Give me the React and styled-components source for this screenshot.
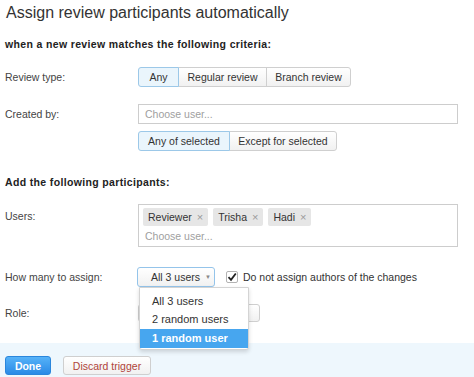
import React from "react";
import styled, { createGlobalStyle } from "styled-components";

const Global = createGlobalStyle`
  html, body { margin: 0; padding: 0; background: #fff; }
  body { font-family: "Liberation Sans", Arial, sans-serif; font-size: 10.5px; color: #333; overflow: hidden; }
  * { box-sizing: border-box; }
`;

const Page = styled.div`
  width: 474px;
  height: 377px;
  display: flex;
  flex-direction: column;
  position: relative;
`;

const Body = styled.div`
  padding: 0 5px;
  display: flex;
  flex-direction: column;
`;

const Title = styled.h1`
  margin: 0 0 0 1px;
  font-size: 16px;
  font-weight: normal;
  line-height: 26px;
  color: #333;
`;

const Section = styled.h2`
  margin: ${(p) => p.$top}px 0 0;
  font-size: 10.5px;
  font-weight: bold;
  letter-spacing: 0.35px;
  line-height: 14px;
  color: #222;
`;

const Row = styled.div`
  display: grid;
  grid-template-columns: 133px 1fr;
  margin-top: ${(p) => p.$top}px;
  align-items: ${(p) => (p.$top_align ? "start" : "center")};
`;

const Label = styled.div`
  line-height: ${(p) => p.$lh || 20}px;
  color: #444;
`;

const Controls = styled.div`
  display: flex;
  flex-direction: column;
  gap: 7px;
  align-items: flex-start;
`;

const Inline = styled.div`
  display: flex;
  align-items: center;
  gap: 11px;
  position: relative;
`;

const Segmented = styled.div`
  display: inline-flex;
  height: 20px;
`;

const Seg = styled.button`
  font: inherit;
  color: #333;
  height: 20px;
  width: ${(p) => p.$w}px;
  padding: 0;
  white-space: nowrap;
  border: 1px solid ${(p) => (p.$active ? "#9cc8e8" : "#cfcfcf")};
  margin-left: ${(p) => (p.$first ? 0 : -1)}px;
  position: relative;
  z-index: ${(p) => (p.$active ? 1 : 0)};
  background: ${(p) =>
    p.$active ? "#eaf5fc" : "linear-gradient(#ffffff, #f1f1f1)"};
  border-radius: ${(p) =>
    p.$first ? "3px 0 0 3px" : p.$last ? "0 3px 3px 0" : "0"};
`;

const Input = styled.div`
  width: 320px;
  height: 20px;
  border: 1px solid #cdcdcd;
  padding: 0 6px;
  line-height: 18px;
  color: #a0a0a0;
`;

const TagBox = styled.div`
  width: 320px;
  height: 43px;
  border: 1px solid #cdcdcd;
  padding: 3px 4px 0;
  display: flex;
  flex-direction: column;
  gap: 2px;
`;

const Tags = styled.div`
  display: flex;
  gap: 5px;
`;

const Tag = styled.span`
  display: inline-flex;
  align-items: center;
  gap: 5px;
  height: 18px;
  padding: 0 5px;
  background: #e6e6e6;
  border-radius: 2px;
  color: #333;
`;

const X = styled.span`
  color: #9a9a9a;
  font-size: 11px;
`;

const Placeholder = styled.span`
  color: #a0a0a0;
  padding-left: 2px;
  line-height: 16px;
`;

const DropButton = styled.button`
  font: inherit;
  color: #333;
  height: ${(p) => p.$h || 20}px;
  width: ${(p) => p.$w}px;
  margin-left: ${(p) => p.$ml || 0}px;
  padding: 0 0 0 ${(p) => p.$pl || 0}px;
  white-space: nowrap;
  text-align: left;
  border: 1px solid ${(p) => (p.$focus ? "#94c4ea" : "#cfcfcf")};
  border-radius: 3px;
  background: linear-gradient(#ffffff, #f1f1f1);
  display: flex;
  align-items: center;
  gap: 5px;
`;

const Caret = styled.span`
  font-size: 6px;
  color: #888;
`;

const Check = styled.label`
  display: flex;
  align-items: center;
  gap: 5px;
  color: #333;
  white-space: nowrap;
`;

const Box = styled.span`
  width: 12px;
  height: 12px;
  border: 1px solid #b3b3b3;
  border-radius: 2px;
  background: #fff;
  display: inline-flex;
  align-items: center;
  justify-content: center;
`;

const Menu = styled.div`
  position: absolute;
  left: 1px;
  top: 20px;
  width: 110px;
  background: #fff;
  border: 1px solid #d4d4d4;
  border-radius: 0 0 3px 3px;
  box-shadow: 0 2px 4px rgba(0, 0, 0, 0.15);
  padding: 4px 0 1px;
  z-index: 5;
`;

const Item = styled.div`
  line-height: 18px;
  padding-left: 12px;
  font-size: 11px;
  white-space: nowrap;
  color: ${(p) => (p.$sel ? "#fff" : "#333")};
  background: ${(p) => (p.$sel ? "#47a6ef" : "transparent")};
  font-weight: ${(p) => (p.$sel ? "bold" : "normal")};
  margin-top: ${(p) => (p.$sel ? 1 : 0)}px;
  height: ${(p) => (p.$sel ? 19 : 18)}px;
`;

const Footer = styled.div`
  margin-top: 21px;
  background: #eef7fd;
  flex: 1;
  padding: 13px 5px 0;
  display: flex;
  gap: 12px;
  align-items: flex-start;
`;

const Done = styled.button`
  font: inherit;
  font-weight: bold;
  color: #fff;
  width: 46px;
  height: 19px;
  border: 1px solid #2a86dc;
  border-radius: 3px;
  background: linear-gradient(#56b2f8, #2a8ae6);
`;

const Discard = styled.button`
  font: inherit;
  color: #b0443a;
  width: 88px;
  height: 19px;
  border: 1px solid #cfcfcf;
  border-radius: 3px;
  background: linear-gradient(#ffffff, #f1f1f1);
`;

export default function App() {
  return (
    <Page>
      <Global />
      <Body>
        <Title>Assign review participants automatically</Title>
        <Section $top={11}>when a new review matches the following criteria:</Section>

        <Row $top={16}>
          <Label>Review type:</Label>
          <Segmented>
            <Seg $first $active $w={41}>Any</Seg>
            <Seg $w={89}>Regular review</Seg>
            <Seg $last $w={85}>Branch review</Seg>
          </Segmented>
        </Row>

        <Row $top={17} $top_align>
          <Label>Created by:</Label>
          <Controls>
            <Input>Choose user...</Input>
            <Segmented>
              <Seg $first $active $w={92}>Any of selected</Seg>
              <Seg $last $w={108}>Except for selected</Seg>
            </Segmented>
          </Controls>
        </Row>

        <Section $top={24}>Add the following participants:</Section>

        <Row $top={15} $top_align>
          <Label $lh={24}>Users:</Label>
          <TagBox>
            <Tags>
              <Tag>Reviewer <X>×</X></Tag>
              <Tag>Trisha <X>×</X></Tag>
              <Tag>Hadi <X>×</X></Tag>
            </Tags>
            <Placeholder>Choose user...</Placeholder>
          </TagBox>
        </Row>

        <Row $top={20}>
          <Label>How many to assign:</Label>
          <Inline>
            <DropButton $focus $w={78} $ml={-1} $pl={13}>
              All 3 users <Caret>▼</Caret>
            </DropButton>
            <Check>
              <Box>
                <svg width="10" height="10" viewBox="0 0 10 10">
                  <path d="M1.5 5.2 L4 7.8 L8.8 1.5" fill="none" stroke="#222" strokeWidth="1.8" />
                </svg>
              </Box>
              Do not assign authors of the changes
            </Check>
            <Menu>
              <Item>All 3 users</Item>
              <Item>2 random users</Item>
              <Item $sel>1 random user</Item>
            </Menu>
          </Inline>
        </Row>

        <Row $top={17}>
          <Label $lh={18}>Role:</Label>
          <DropButton $w={122} $h={18} />
        </Row>
      </Body>
      <Footer>
        <Done>Done</Done>
        <Discard>Discard trigger</Discard>
      </Footer>
    </Page>
  );
}
